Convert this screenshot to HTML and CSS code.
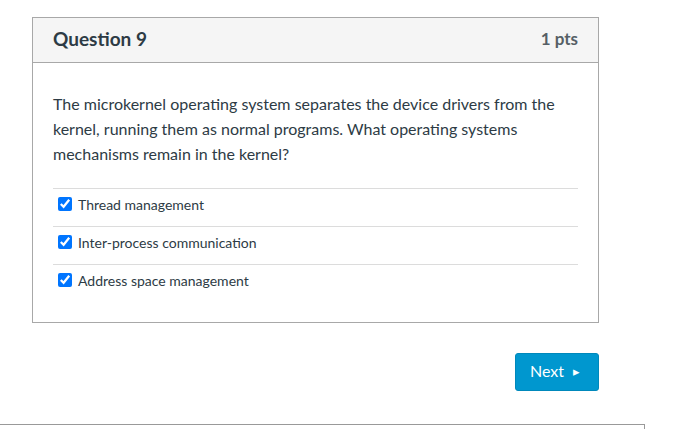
FILE: index.html
```html
<!DOCTYPE html>
<html>
<head>
<meta charset="utf-8">
<link rel="stylesheet" href="styles.css">
</head>
<body>
<div class="page">
  <div class="card">
    <div class="card-header">
      <span class="title">Question 9</span>
      <span class="pts">1 pts</span>
    </div>
    <div class="card-body">
      <p class="question">The microkernel operating system separates the device drivers from the kernel, running them as normal programs. What operating systems mechanisms remain in the kernel?</p>
      <div class="answers">
        <label class="answer"><input type="checkbox" checked><span>Thread management</span></label>
        <label class="answer"><input type="checkbox" checked><span>Inter-process communication</span></label>
        <label class="answer"><input type="checkbox" checked><span>Address space management</span></label>
      </div>
    </div>
  </div>
  <div class="actions">
    <button class="next">Next <span class="arrow">&#9656;</span></button>
  </div>
</div>
<div class="footer-box"></div>
</body>
</html>
```
FILE: styles.css
```css
html, body {
  margin: 0;
  padding: 0;
  background: #fff;
  font-family: Lato, "Open Sans", sans-serif;
  color: #2d3b45;
  overflow: hidden;
}
.page {
  padding: 17px 0 0 32px;
  width: 567px;
}
.card {
  border: 1px solid #a8a8a8;
  box-sizing: border-box;
  width: 567px;
}
.card-header {
  display: flex;
  justify-content: space-between;
  align-items: center;
  background: #f5f5f5;
  border-bottom: 1px solid #a8a8a8;
  height: 45px;
  padding: 0 20px 4px 20px;
  box-sizing: border-box;
}
.title {
  font-size: 19px;
  font-weight: 700;
  color: #2d3b45;
}
.pts {
  font-size: 17px;
  font-weight: 700;
  color: #555f66;
}
.card-body {
  padding: 28px 20px 20px 20px;
}
.question {
  margin: 0;
  font-size: 16px;
  line-height: 25px;
}
.answers {
  margin-top: 22px;
}
.answer {
  display: flex;
  align-items: center;
  height: 38px;
  padding-bottom: 7px;
  box-sizing: border-box;
  border-top: 1px solid #dcdcdc;
  font-size: 14px;
}
.answer input {
  margin: 0 0 0 5px;
  width: 14px;
  height: 14px;
  accent-color: #0075ff;
}
.answer span {
  margin-left: 6px;
}
.actions {
  display: flex;
  justify-content: flex-end;
  margin-top: 30px;
}
.next {
  width: 84px;
  height: 38px;
  background: #0097cf;
  border: 1px solid #0088bb;
  border-radius: 3px;
  color: #fff;
  font-family: Lato, sans-serif;
  font-size: 16px;
  padding: 0 4px 3px 0;
}
.arrow {
  font-size: 13px;
  margin-left: 5px;
  position: relative;
  top: -1px;
}
.footer-box {
  margin-top: 33px;
  width: 645px;
  height: 20px;
  border-top: 1px solid #999;
  border-right: 1px solid #999;
  box-sizing: border-box;
}
```
